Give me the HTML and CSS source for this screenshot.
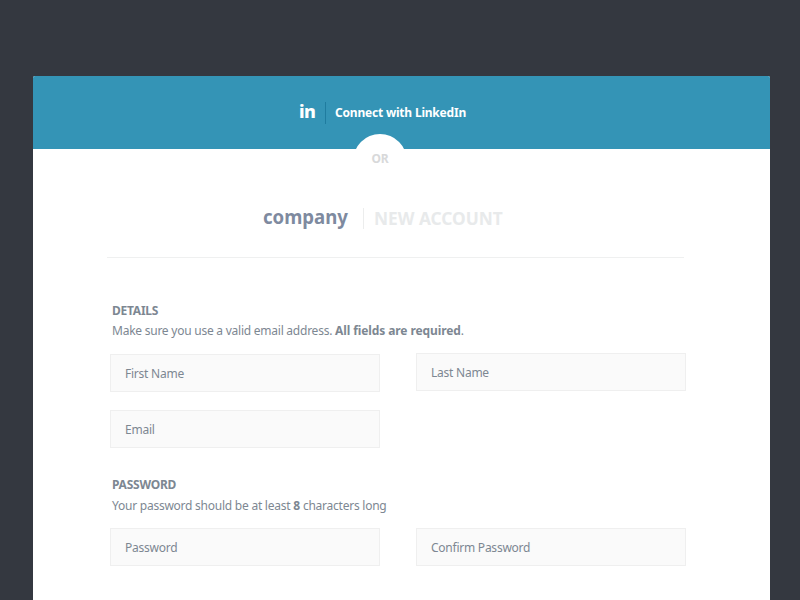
FILE: index.html
```html
<!DOCTYPE html>
<html lang="en">
<head>
  <meta charset="UTF-8" />
  <meta name="viewport" content="width=device-width, initial-scale=1.0"/>
  <title>New Account</title>
  <link rel="stylesheet" href="styles.css">
</head>
<body>
  <div class="card">
    <a class="linkedin" href="#">
      <span class="linkedin-logo">in</span>
      <span class="linkedin-text">Connect with LinkedIn</span>
      <span class="or">OR</span>
    </a>

    <div class="title">
      <h1 class="brand">company</h1>
      <div class="separator"></div>
      <h2 class="heading">NEW ACCOUNT</h2>
    </div>

    <form class="form">
      <h3>DETAILS</h3>
      <p class="hint hint-details">Make sure you use a valid email address. <b>All fields are required</b>.</p>
      <div class="fields">
        <input type="text" placeholder="First Name" />
        <input class="last-name" type="text" placeholder="Last Name" />
        <input type="email" placeholder="Email" />
      </div>

      <h3>PASSWORD</h3>
      <p class="hint hint-password">Your password should be at least <b>8</b> characters long</p>
      <div class="fields">
        <input type="password" placeholder="Password" />
        <input type="password" placeholder="Confirm Password" />
      </div>
    </form>
  </div>
</body>
</html>
```

FILE: styles.css
```css
body {
  margin: 0;
  padding-top: 76px;
  height: 600px;
  box-sizing: border-box;
  font-family: "Noto Sans", "Open Sans", sans-serif;
  font-size: 12px;
  letter-spacing: -0.24px;
  color: #7d8792;
  background-color: #343840;
}

.card {
  width: 737px;
  height: 524px;
  margin-left: 33px;
  background-color: #fff;
  border-radius: 2px 2px 0 0;
}

/* LinkedIn bar */
.linkedin {
  position: relative;
  display: flex;
  align-items: center;
  height: 73px;
  padding-left: 266px;
  box-sizing: border-box;
  background-color: #3494b6;
  border-radius: 2px 2px 0 0;
  color: #fff;
  font-weight: bold;
  text-decoration: none;
}

.linkedin-logo {
  width: 26px;
  height: 22px;
  border-right: 1px solid #1f7c9f;
  font-size: 18px;
  font-weight: 800;
  letter-spacing: -0.7px;
  line-height: 18px;
}

.linkedin-text {
  margin-left: 9px;
  letter-spacing: -0.2px;
  line-height: 20px;
}

.or {
  position: absolute;
  top: 58px;
  left: 320px;
  width: 54px;
  height: 54px;
  border-radius: 50%;
  background-color: #fff;
  color: #d8d9da;
  line-height: 49px;
  letter-spacing: -0.3px;
  text-align: center;
}

/* title */
.title {
  display: flex;
  height: 109px;
  width: 577px;
  margin-left: 74px;
  padding: 59px 0 0 156px;
  box-sizing: border-box;
  border-bottom: 1px solid #eff0f0;
}

.brand,
.heading {
  margin: 0;
  letter-spacing: 0;
  transform-origin: left;
}

.brand {
  width: 100px;
  color: #7e8a9f;
  font-size: 20px;
  line-height: 18px;
  transform: scaleX(0.93);
}

.separator {
  width: 1px;
  height: 21px;
  background-color: #eceded;
}

.heading {
  margin-left: 10px;
  color: #e8eaeb;
  font-size: 18px;
  line-height: 20px;
  transform: scaleX(0.96);
}

/* form */
.form {
  padding: 43px 0 0 77px;
}

h3 {
  margin: 0 0 0 2px;
  font-size: 12px;
  line-height: 20px;
}

.hint {
  margin: 0 0 0 2px;
  line-height: 20px;
}

.hint b {
  letter-spacing: -0.1px;
}

.hint-details {
  margin-bottom: 13px;
}

.hint-password {
  margin-top: 1px;
  margin-bottom: 12px;
}

.fields {
  display: grid;
  grid-template-columns: 270px 270px;
  gap: 18px 36px;
  margin-bottom: 27px;
}

.fields input {
  height: 38px;
  padding: 0 14px;
  box-sizing: border-box;
  border: 1px solid #efefef;
  border-radius: 0;
  background-color: #fafafa;
  color: #7d8792;
  font-family: inherit;
  font-size: 12px;
  letter-spacing: inherit;
  outline: none;
}

.fields .last-name {
  margin-top: -1px;
}

.fields input::placeholder {
  color: #7d8792;
}
```
